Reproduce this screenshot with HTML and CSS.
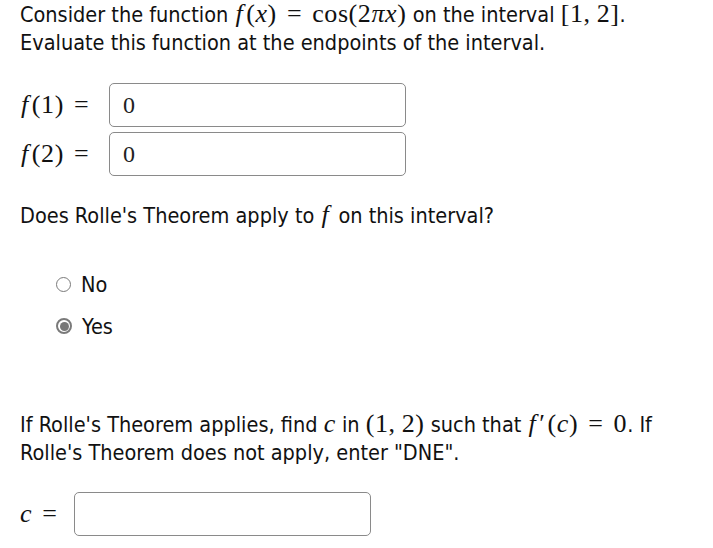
FILE: index.html
```html
<!DOCTYPE html>
<html><head><meta charset="utf-8"><link rel="stylesheet" href="styles.css"></head>
<body>
<main class="page">
  <p class="para">Consider the function <span class="m"><i class="f">f</i>(<i>x</i>)<span class="rel">=</span>cos(2<i>π</i><i>x</i>)</span> on the interval <span class="m">[1,<span class="th"></span>2]</span>.<br>Evaluate this function at the endpoints of the interval.</p>

  <div class="answers">
    <div class="row">
      <span class="m label"><i class="f">f</i>(1)<span class="rel">=</span></span>
      <div class="box"><span class="m val">0</span></div>
    </div>
    <div class="row">
      <span class="m label"><i class="f">f</i>(2)<span class="rel">=</span></span>
      <div class="box"><span class="m val">0</span></div>
    </div>
  </div>

  <p class="question">Does Rolle's Theorem apply to <span class="m"><i class="f">f</i></span> on this interval?</p>

  <div class="choices">
    <label class="choice"><span class="radio"></span>No</label>
    <label class="choice"><span class="radio checked"></span>Yes</label>
  </div>

  <p class="para2">If Rolle's Theorem applies, find <span class="m"><i>c</i></span> in <span class="m">(1,<span class="th"></span>2)</span> such that <span class="m"><i class="f">f</i><span class="pr">′</span>(<i>c</i>)<span class="rel">=</span>0</span>. If<br>Rolle's Theorem does not apply, enter "DNE".</p>

  <div class="row crow">
    <span class="m label clabel"><i>c</i><span class="rel">=</span></span>
    <div class="box cbox"></div>
  </div>
</main>
</body></html>
```
FILE: styles.css
```css
html,body{margin:0;padding:0;background:#fff;}
body{font-family:"DejaVu Sans Condensed","DejaVu Sans",sans-serif;font-size:21.5px;color:#111;}
.page{padding:1px 20px 0 20px;}
p{margin:0;line-height:28px;}
.m{font-family:"Liberation Serif","Times New Roman",serif;font-size:26px;white-space:nowrap;letter-spacing:0.6px;line-height:20px;}
.m i{font-style:italic;}
.m .f{padding:0 3px 0 1px;}
.pr{padding-right:2px;}
.rel{margin:0 10px;}
.th{display:inline-block;width:6px;}
.answers{margin-top:26px;display:flex;flex-direction:column;gap:5px;}
.row{display:flex;align-items:center;}
.label{width:89px;flex:none;line-height:44px;}
.box{width:297px;height:44px;border:1px solid #8a8a8a;border-radius:5px;display:flex;align-items:center;padding-left:13px;box-sizing:border-box;}
.val{font-size:24px;color:#222;line-height:28px;}
.question{margin-top:26px;}
.choices{margin-top:33px;display:flex;flex-direction:column;}
.choice{display:flex;align-items:center;height:42px;padding-left:36px;}
.radio{width:13px;height:13px;border:1.5px solid #7a7a7a;border-radius:50%;margin-right:10px;position:relative;flex:none;}
.radio.checked{border:2px solid #7a7a7a;width:12px;height:12px;}
.radio.checked::after{content:"";position:absolute;left:1.5px;top:1.5px;width:9px;height:9px;border-radius:50%;background:#777;}
.para2{margin-top:64px;}
.crow{margin-top:25px;}
.clabel{width:54px;}
.cbox{padding-left:0;}
```
